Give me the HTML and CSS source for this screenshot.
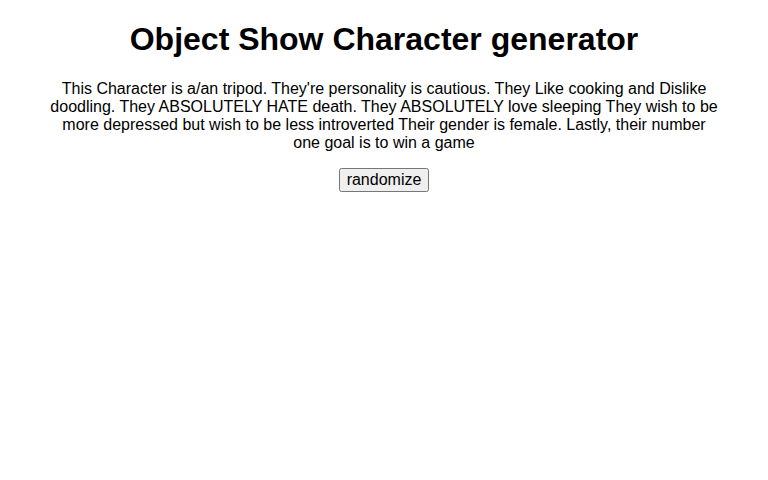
FILE: index.html
```html
<!DOCTYPE html>
<html lang="en">
<head>
  <meta charset="UTF-8">
  <title>Object Show Character generator</title>
  <link rel="stylesheet" href="styles.css">
</head>
<body>
  <h1>Object Show Character generator</h1>
  <p id="output">This Character is a/an tripod. They're personality is cautious. They Like cooking and Dislike doodling. They ABSOLUTELY HATE death. They ABSOLUTELY love sleeping They wish to be more depressed but wish to be less introverted Their gender is female. Lastly, their number one goal is to win a game</p>
  <button id="randomize">randomize</button>
</body>
</html>
```

FILE: styles.css
```css
body {
  margin: 0;
  font-family: "Liberation Sans", Arial, sans-serif;
  text-align: center;
}
h1 {
  font-size: 32px;
}
p {
  font-size: 16px;
  max-width: 672px;
  margin-left: auto;
  margin-right: auto;
}
button {
  font-family: "Liberation Sans", Arial, sans-serif;
  font-size: 16px;
}
```
